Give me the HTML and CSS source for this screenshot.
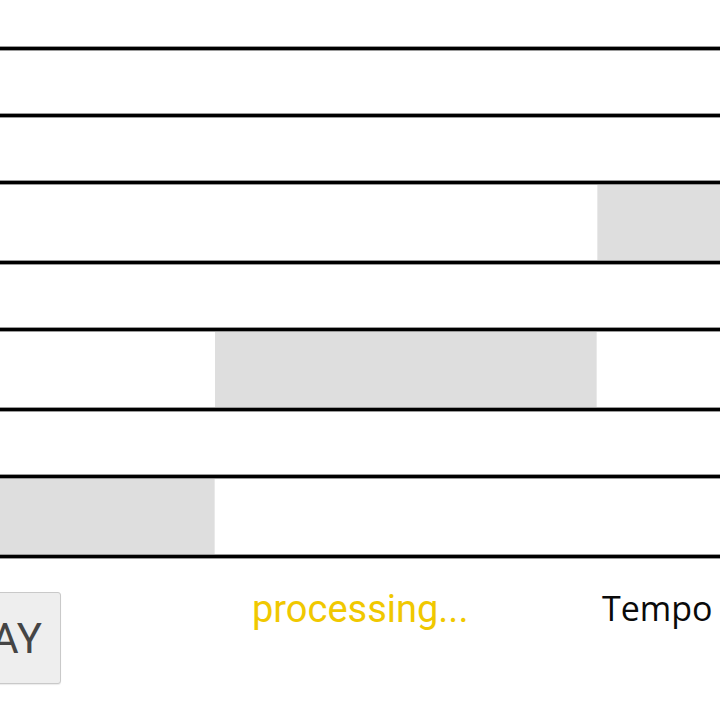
FILE: index.html
```html
<!DOCTYPE html>
<html>
<head>
<meta charset="utf-8">
<link rel="stylesheet" href="styles.css">
</head>
<body>
<div class="screen">
  <div class="top-space"></div>
  <div class="rule"></div>
  <div class="row short"><div></div><div></div><div></div></div>
  <div class="rule"></div>
  <div class="row short"><div></div><div></div><div></div></div>
  <div class="rule"></div>
  <div class="row tall"><div></div><div></div><div class="on last"></div></div>
  <div class="rule"></div>
  <div class="row short"><div></div><div></div><div></div></div>
  <div class="rule"></div>
  <div class="row tall"><div></div><div class="on"></div><div></div></div>
  <div class="rule"></div>
  <div class="row short"><div></div><div></div><div></div></div>
  <div class="rule"></div>
  <div class="row tall"><div class="on"></div><div></div><div></div></div>
  <div class="rule"></div>
  <div class="controls">
    <button class="play">PLAY</button>
    <span class="status">processing...</span>
    <span class="tempo">Tempo</span>
  </div>
</div>
</body>
</html>
```
FILE: styles.css
```css
html, body {
  margin: 0;
  padding: 0;
  background: #ffffff;
}
body {
  width: 720px;
  height: 720px;
  overflow: hidden;
}
.screen {
  display: flex;
  flex-direction: column;
  width: 720px;
}
.top-space {
  height: 46px;
}
.rule {
  height: 5px;
  background: linear-gradient(to bottom, #9a9a9a 0, #9a9a9a 1px, #000 1px, #000 4px, #9a9a9a 4px, #9a9a9a 5px);
}
.row {
  display: grid;
  grid-template-columns: 215px 382px 123px;
}
.row.short { height: 62px; }
.row.tall { height: 75px; }
.row > .on {
  background: #dedede;
  border-right: 1px solid #e9e9e9;
}
.row > .on.last {
  border-right: none;
  border-left: 1px solid #e9e9e9;
}
.controls {
  display: flex;
  align-items: flex-start;
  white-space: nowrap;
}
.play {
  box-sizing: border-box;
  width: 140px;
  height: 92px;
  margin: 33px 0 0 -79px;
  padding: 0 18px 0 0;
  text-align: right;
  font-family: Roboto, "Liberation Sans", sans-serif;
  font-size: 42px;
  color: #454545;
  background: #eeeeee;
  border: 1px solid #c9c9c9;
  border-radius: 3px;
  box-shadow: 0 1px 1px rgba(0,0,0,0.08);
}
.status {
  width: 350px;
  margin: 28px 0 0 191px;
  font-family: Roboto, "Liberation Sans", sans-serif;
  font-size: 38px;
  line-height: normal;
  color: #f0c800;
}
.tempo {
  margin-top: 26px;
  font-family: "Open Sans", "DejaVu Sans", sans-serif;
  font-size: 34px;
  line-height: normal;
  color: #0a0a0a;
}
```
